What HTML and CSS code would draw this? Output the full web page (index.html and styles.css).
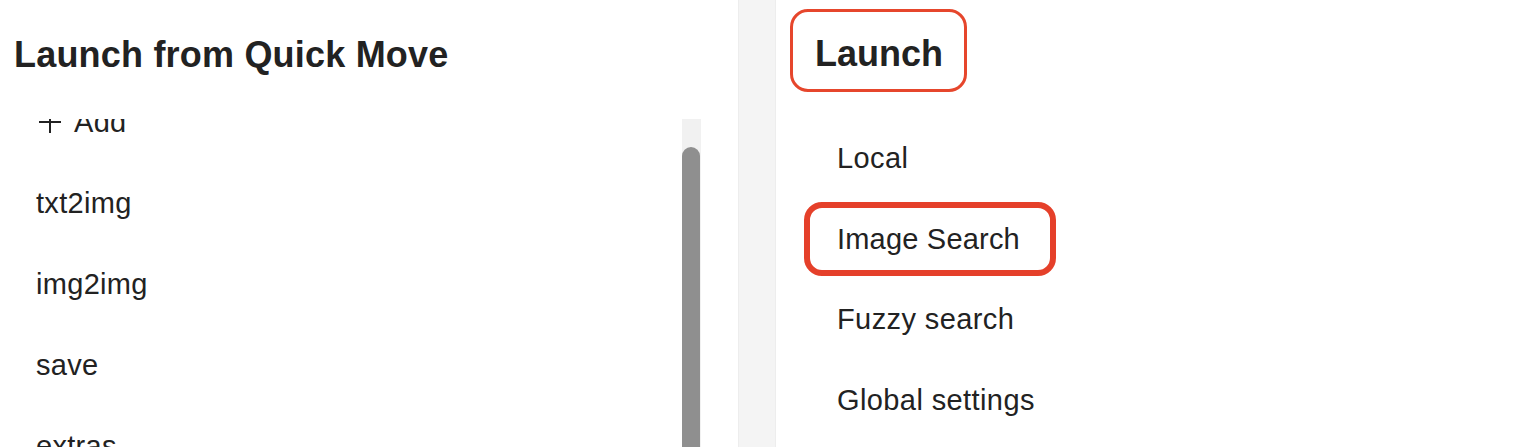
FILE: index.html
```html
<!DOCTYPE html>
<html lang="en">
<head>
<meta charset="utf-8">
<title>Launch settings</title>
<link rel="stylesheet" href="styles.css">
</head>
<body>
<div class="app">
  <section class="left">
    <h2 class="left-title">Launch from Quick Move</h2>
    <div class="list-wrap">
      <div class="list-viewport">
        <ul class="list">
          <li class="item add"><svg class="plus" width="24" height="24" viewBox="0 0 24 24" aria-hidden="true"><path d="M12 1V23M1 12H23" stroke="#222" stroke-width="2" fill="none"/></svg>Add</li>
          <li class="item">txt2img</li>
          <li class="item">img2img</li>
          <li class="item">save</li>
          <li class="item">extras</li>
          <li class="item">settings</li>
        </ul>
      </div>
      <div class="scrollbar">
        <div class="thumb"></div>
      </div>
    </div>
  </section>
  <div class="divider"></div>
  <section class="right">
    <div class="right-head">
      <h2 class="right-title">Launch</h2>
    </div>
    <ul class="menu">
      <li class="menu-row"><span class="menu-item">Local</span></li>
      <li class="menu-row"><span class="menu-item boxed">Image Search</span></li>
      <li class="menu-row"><span class="menu-item">Fuzzy search</span></li>
      <li class="menu-row"><span class="menu-item">Global settings</span></li>
    </ul>
  </section>
</div>
</body>
</html>
```
FILE: styles.css
```css
html, body {
  margin: 0;
  padding: 0;
  background: #ffffff;
  height: 100%;
  overflow: hidden;
}
body {
  font-family: "Liberation Sans", Arial, Helvetica, sans-serif;
  color: #222222;
}
ul {
  list-style: none;
  margin: 0;
  padding: 0;
}
.app {
  display: flex;
  height: 447px;
}
.left {
  width: 687px;
  padding-left: 14px;
  display: flex;
  flex-direction: column;
}
.left-title {
  margin: 35px 0 0 0;
  font-size: 36px;
  line-height: 40px;
  font-weight: 700;
  letter-spacing: 0.2px;
  color: #222222;
}
.list-wrap {
  margin-top: 44px;
  flex: 1;
  display: flex;
  min-height: 0;
}
.list-viewport {
  flex: 1;
  overflow: hidden;
}
.list {
  margin-top: -37px;
}
.item {
  padding-left: 22px;
  font-size: 29px;
  line-height: 81px;
  letter-spacing: 0.3px;
  color: #222222;
}
.plus {
  vertical-align: -2px;
  margin: 0 12px 0 2px;
}
.scrollbar {
  width: 19px;
  background: #f1f1f1;
  display: flex;
  flex-direction: column;
  padding-top: 28px;
}
.thumb {
  flex: 1;
  margin: 0 1px 0 0;
  background: #8f8f8f;
  border-radius: 9px 9px 0 0;
}
.divider {
  margin-left: 37px;
  width: 36px;
  background: #f4f4f4;
  border-left: 1px solid #ededed;
  border-right: 1px solid #ededed;
}
.right {
  flex: 1;
  padding-left: 14px;
  padding-top: 9px;
}
.right-head {
  display: flex;
}
.right-title {
  margin: 0;
  font-size: 36px;
  line-height: 40px;
  font-weight: 700;
  color: #222222;
  border: 3px solid #e6462c;
  border-radius: 18px;
  padding: 22px 21px 15px 22px;
}
.menu {
  margin-top: 25.5px;
}
.menu-row {
  height: 80.7px;
  display: flex;
  align-items: center;
}
.menu-item {
  margin-left: 47px;
  font-size: 29px;
  line-height: 80px;
  letter-spacing: 0.4px;
  color: #222222;
}
.menu-item.boxed {
  margin-left: 14px;
  border: 6px solid #e5402a;
  border-radius: 18px;
  padding: 0 30px 0 27px;
  line-height: 62px;
  letter-spacing: 0.2px;
}
```
